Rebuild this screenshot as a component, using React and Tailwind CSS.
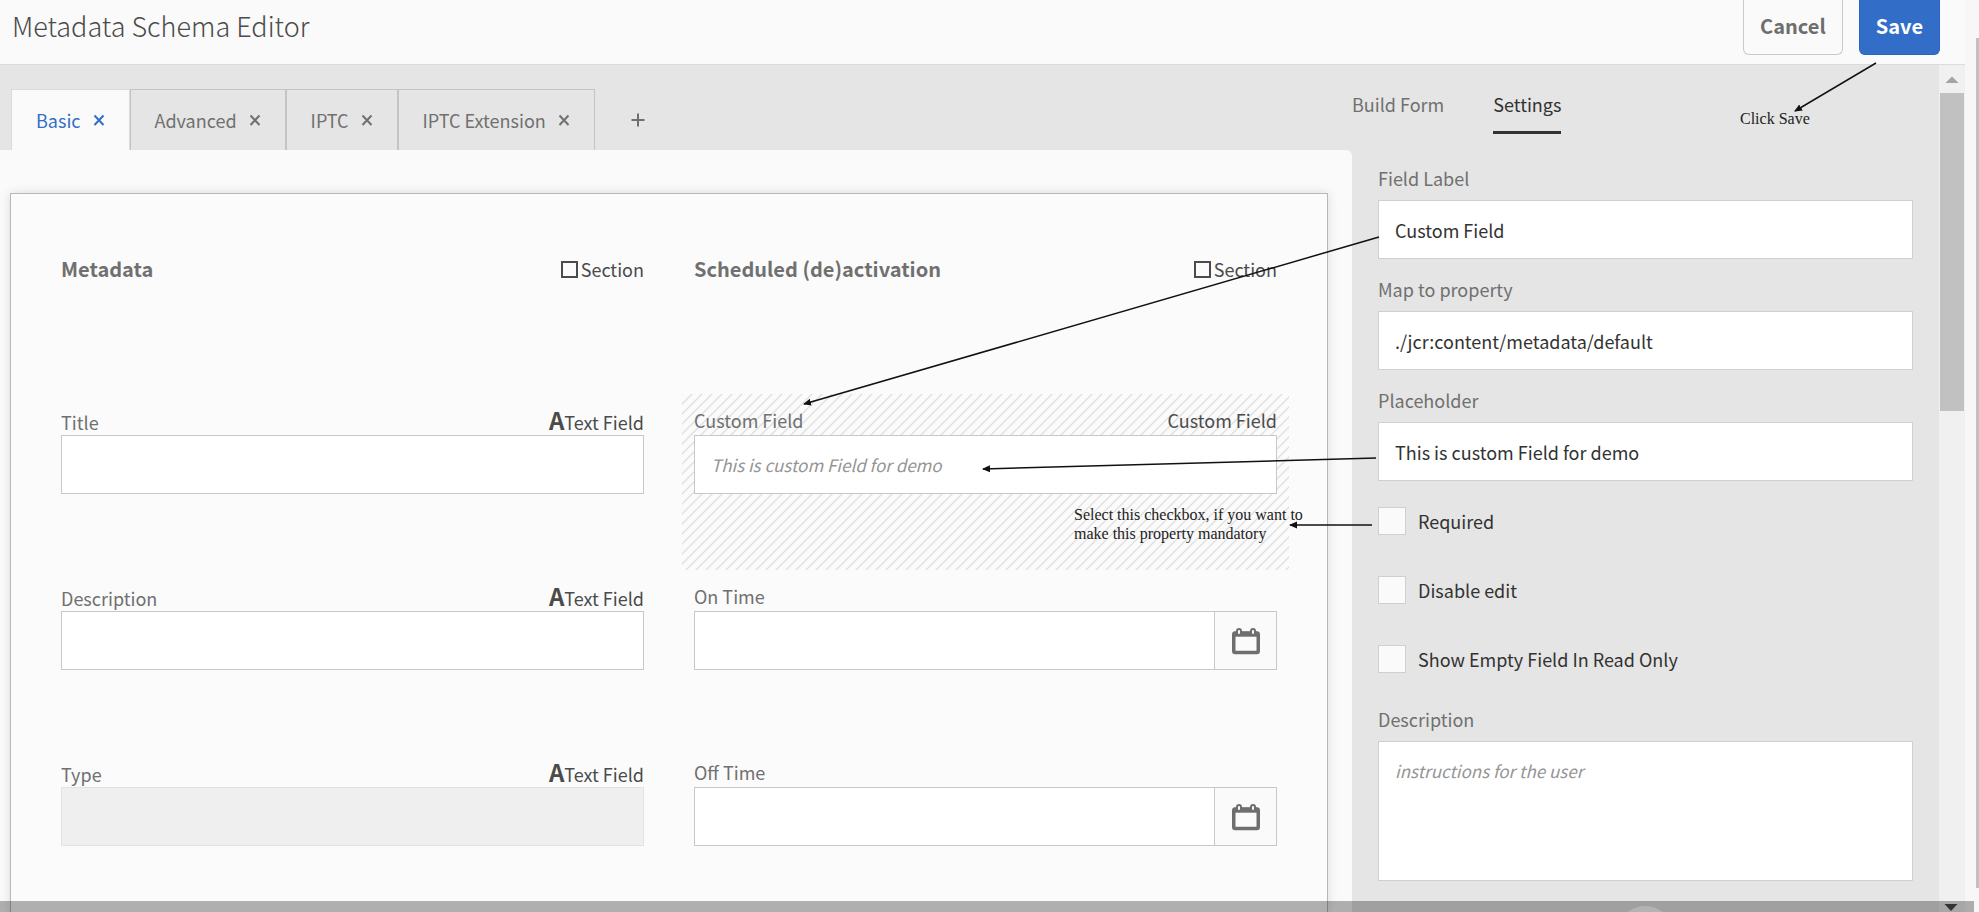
import { useState } from 'react';

// ─────────────────────────────────────────────────────────────────────────────
// Data
// ─────────────────────────────────────────────────────────────────────────────

const TABS = ['Basic', 'Advanced', 'IPTC', 'IPTC Extension'];

const LEFT_FIELDS = [
  { id: 'title', label: 'Title' },
  { id: 'description', label: 'Description' },
  { id: 'type', label: 'Type', disabled: true },
];

const DATE_FIELDS = [
  { id: 'on-time', label: 'On Time' },
  { id: 'off-time', label: 'Off Time' },
];

const CHECKS = [
  { id: 'required', label: 'Required' },
  { id: 'disable-edit', label: 'Disable edit' },
  { id: 'show-empty', label: 'Show Empty Field In Read Only' },
];

const SANS = "font-['Noto_Sans_CJK_SC','Noto_Sans',sans-serif]";

// ─────────────────────────────────────────────────────────────────────────────
// Icons
// ─────────────────────────────────────────────────────────────────────────────

const CloseIcon = () => (
  <svg width="12" height="12" viewBox="0 0 12 12" fill="none" stroke="currentColor" strokeWidth="2">
    <path d="M1.5 1.5l9 9.5M10.5 1.5l-9 9.5" />
  </svg>
);

const PlusIcon = () => (
  <svg width="14" height="14" viewBox="0 0 14 14" fill="none" stroke="currentColor" strokeWidth="2">
    <path d="M7 0.5v13M0.5 7h13" />
  </svg>
);

const CalendarIcon = () => (
  <svg width="30" height="28" viewBox="0 0 30 28" fill="none" stroke="#6e6e6e">
    <rect x="2.75" y="6" width="24.5" height="19.5" rx="1.5" strokeWidth="3.5" />
    <path d="M3 7.2h24" strokeWidth="5" />
    <rect x="6" y="2" width="4" height="6" rx="2" fill="#fafafa" strokeWidth="2" />
    <rect x="20" y="2" width="4" height="6" rx="2" fill="#fafafa" strokeWidth="2" />
  </svg>
);

// ─────────────────────────────────────────────────────────────────────────────
// Form canvas
// ─────────────────────────────────────────────────────────────────────────────

const SectionHeader = ({ title }) => (
  <div className="flex h-44 items-start justify-between px-3 pt-[39px] leading-6">
    <h2 className="text-[20px] font-bold text-[#707070]">{title}</h2>
    <span className="flex items-center gap-[3px] text-[18px] text-[#4b4b4b]">
      <span className="size-[17px] border-2 border-[#4b4b4b]" />
      Section
    </span>
  </div>
);

const TextFieldRow = ({ field }) => (
  <li className="h-44 px-3 pt-[14px]">
    <div className="flex h-[27px] items-baseline justify-between text-[18px] leading-6">
      <label htmlFor={field.id} className="text-[#707070]">{field.label}</label>
      <span className="text-[#4b4b4b]">
        <b className="text-[24px] leading-6">A</b>Text Field
      </span>
    </div>
    <input
      id={field.id}
      type="text"
      disabled={field.disabled}
      className="h-[59px] w-full border border-[#c8c8c8] bg-white px-4 disabled:border-[#e2e2e2] disabled:bg-[#efefef]"
    />
  </li>
);

const DateFieldRow = ({ field }) => (
  <li className="h-44 px-3 pt-[14px]">
    <label htmlFor={field.id} className="block h-[27px] text-[18px] leading-6 text-[#707070]">{field.label}</label>
    <div className="flex h-[59px] border border-[#c8c8c8]">
      <input id={field.id} type="text" className="min-w-0 flex-1 bg-white px-4" />
      <button
        type="button"
        aria-label={`Pick ${field.label}`}
        className="flex w-[62px] items-center justify-center border-l border-[#c8c8c8] bg-[#fafafa]"
      >
        <CalendarIcon />
      </button>
    </div>
  </li>
);

// Selected field, marked with diagonal hatching
const CustomFieldRow = ({ label, placeholder }) => (
  <li className="h-44 bg-[linear-gradient(135deg,#e0e0e0_2%,transparent_8%_42%,#e0e0e0_48%_52%,transparent_58%_92%,#e0e0e0_98%)] bg-[length:10px_10px] px-3 pt-[14px]">
    <div className="flex h-[27px] justify-between text-[18px] leading-6">
      <label htmlFor="custom" className="text-[#707070]">{label}</label>
      <span className="text-[#4b4b4b]">Custom Field</span>
    </div>
    <input
      id="custom"
      type="text"
      placeholder={placeholder}
      className="h-[59px] w-full border border-[#c8c8c8] bg-white px-4 text-[17px] placeholder:text-[#959595] placeholder:italic"
    />
  </li>
);

// ─────────────────────────────────────────────────────────────────────────────
// Settings panel
// ─────────────────────────────────────────────────────────────────────────────

const Setting = ({ id, label, value, onChange }) => (
  <div>
    <label htmlFor={id} className="block h-[34px] text-[18px] leading-6 text-[#707070]">{label}</label>
    <input
      id={id}
      type="text"
      value={value}
      onChange={e => onChange(e.target.value)}
      className="h-[59px] w-full border border-[#d0d0d0] bg-white px-4 text-[18px] text-[#323232]"
    />
  </div>
);

const SettingsPanel = ({ values, update }) => (
  <aside className="w-[587px] shrink-0 pt-[25px]">
    <nav className="flex gap-[49px] text-[18px] leading-7">
      <button type="button" className="h-11 pb-4 text-[#707070]">Build Form</button>
      <button type="button" className="h-11 border-b-3 border-[#323232] pb-[13px] text-[#323232]">Settings</button>
    </nav>

    <div className="px-[26px] pt-8">
      <div className="space-y-[18px]">
        <Setting id="s-label" label="Field Label" value={values.label} onChange={v => update('label', v)} />
        <Setting id="s-map" label="Map to property" value={values.map} onChange={v => update('map', v)} />
        <Setting id="s-placeholder" label="Placeholder" value={values.placeholder} onChange={v => update('placeholder', v)} />
      </div>

      <div className="space-y-[41px] pt-[26px]">
        {CHECKS.map(check => (
          <label key={check.id} className="flex h-7 items-center gap-3 text-[18px] text-[#323232]">
            <input type="checkbox" className="size-7 appearance-none border border-[#d0d0d0] bg-[#fafafa]" />
            {check.label}
          </label>
        ))}
      </div>

      <div className="pt-[34px]">
        <label htmlFor="s-description" className="block h-[34px] text-[18px] leading-6 text-[#707070]">Description</label>
        <textarea
          id="s-description"
          placeholder="instructions for the user"
          className="block h-[140px] w-full resize-none border border-[#d0d0d0] bg-white px-4 py-[17px] text-[17px] leading-6 placeholder:text-[#959595] placeholder:italic"
        />
      </div>
    </div>
  </aside>
);

const PanelScrollbar = () => (
  <div className="flex w-[26px] shrink-0 flex-col items-center bg-[#f0f0f0]">
    <svg width="14" height="28" viewBox="0 0 14 28" fill="#a3a3a3">
      <path d="M0.5 18L7 11.5L13.5 18z" />
    </svg>
    <div className="h-[318px] w-6 bg-[#c1c1c1]" />
  </div>
);

// ─────────────────────────────────────────────────────────────────────────────
// Annotations drawn over the editor
// ─────────────────────────────────────────────────────────────────────────────

const ARROWS = [
  'M1379 237L804 404',
  'M1376 458L983 469',
  'M1372 525L1290 525',
  'M1876 63L1795 111',
];

const Annotations = () => (
  <div className="pointer-events-none absolute inset-0 font-['Liberation_Serif',serif] text-[16px] leading-[19px] text-[#222]">
    <svg className="absolute inset-0" width="1979" height="912" viewBox="0 0 1979 912" fill="none">
      <defs>
        <marker id="head" viewBox="0 0 8 8" refX="7" refY="4" markerWidth="8" markerHeight="8" markerUnits="userSpaceOnUse" orient="auto">
          <path d="M0 0.5L8 4L0 7.5z" fill="#111" />
        </marker>
      </defs>
      {ARROWS.map(d => (
        <path key={d} d={d} stroke="#111" strokeWidth="1.5" markerEnd="url(#head)" />
      ))}
    </svg>
    <p className="absolute top-[109px] left-[1740px]">Click Save</p>
    <p className="absolute top-[505px] left-[1074px] whitespace-nowrap">
      Select this checkbox, if you want to<br />make this property mandatory
    </p>
  </div>
);

// ─────────────────────────────────────────────────────────────────────────────
// Page
// ─────────────────────────────────────────────────────────────────────────────

export default function App() {
  const [active, setActive] = useState('Basic');
  const [values, setValues] = useState({
    label: 'Custom Field',
    map: './jcr:content/metadata/default',
    placeholder: 'This is custom Field for demo',
  });

  const update = (key, value) => setValues(prev => ({ ...prev, [key]: value }));

  return (
    <div className={`relative flex h-screen overflow-hidden bg-[#fafafa] ${SANS}`}>
      <div className="flex min-w-0 flex-1 flex-col">

        {/* ── Header ── */}
        <header className="flex h-[65px] shrink-0 items-start justify-between border-b border-[#dcdcdc] pr-[25px] pl-3">
          <h1 className="pt-2 text-[27px] leading-9 font-light text-[#4b4b4b]">Metadata Schema Editor</h1>
          <div className="flex gap-4 text-[20px] font-bold">
            <button type="button" className="h-[55px] rounded-b-md border border-t-0 border-[#cacaca] px-4 pb-[2px] text-[#6e6e6e]">Cancel</button>
            <button type="button" className="h-[55px] rounded-b-md border border-t-0 border-[#2a64bb] bg-[#326ec8] px-4 pb-[2px] text-white">Save</button>
          </div>
        </header>

        <div className="flex min-h-0 flex-1 bg-[#e5e5e5]">

          {/* ── Tabs and form ── */}
          <main className="flex min-w-0 flex-1 flex-col pt-6">
            <div className="flex h-[61px] shrink-0 items-stretch pl-[11px] text-[18px]">
              {TABS.map(tab => (
                <button
                  key={tab}
                  type="button"
                  onClick={() => setActive(tab)}
                  className={`flex items-center gap-3 border border-b-0 px-6 ${
                    tab === active
                      ? 'border-[#dadada] bg-[#fafafa] text-[#326ec8]'
                      : 'border-[#c4c4c4] text-[#707070]'
                  }`}
                >
                  {tab}
                  <CloseIcon />
                </button>
              ))}
              <button type="button" aria-label="Add tab" className="px-9 text-[#6e6e6e]">
                <PlusIcon />
              </button>
            </div>

            <div className="min-h-0 flex-1 overflow-hidden rounded-tr-md bg-[#fafafa] pt-[43px] pr-6 pl-[10px]">
              <div className="grid h-full grid-cols-2 gap-[26px] border border-b-0 border-[#b8b8b8] bg-[#fbfbfb] px-[38px] pt-6 shadow-[0_0_10px_rgba(0,0,0,0.12)]">
                <section>
                  <SectionHeader title="Metadata" />
                  <ul>
                    {LEFT_FIELDS.map(field => <TextFieldRow key={field.id} field={field} />)}
                  </ul>
                </section>
                <section>
                  <SectionHeader title="Scheduled (de)activation" />
                  <ul>
                    <CustomFieldRow label={values.label} placeholder={values.placeholder} />
                    {DATE_FIELDS.map(field => <DateFieldRow key={field.id} field={field} />)}
                  </ul>
                </section>
              </div>
            </div>
          </main>

          <SettingsPanel values={values} update={update} />
          <PanelScrollbar />
        </div>
      </div>

      {/* ── Page scrollbar ── */}
      <div className="w-[14px] shrink-0 bg-[#f7f7f7] pt-[38px]">
        <div className="ml-auto h-[850px] w-[3px] bg-[#c1c1c1]" />
      </div>

      {/* ── Dimmed strip at the foot ── */}
      <div className="absolute bottom-0 left-0 flex h-[11px] w-[calc(100%-5px)] overflow-hidden bg-black/30">
        <div className="absolute top-[5px] right-[300px] size-[58px] rounded-full bg-white/20" />
        <svg className="absolute top-[3px] right-4" width="14" height="8" viewBox="0 0 14 8" fill="#333">
          <path d="M0.5 0L13.5 0L7 7z" />
        </svg>
      </div>

      <Annotations />
    </div>
  );
}
